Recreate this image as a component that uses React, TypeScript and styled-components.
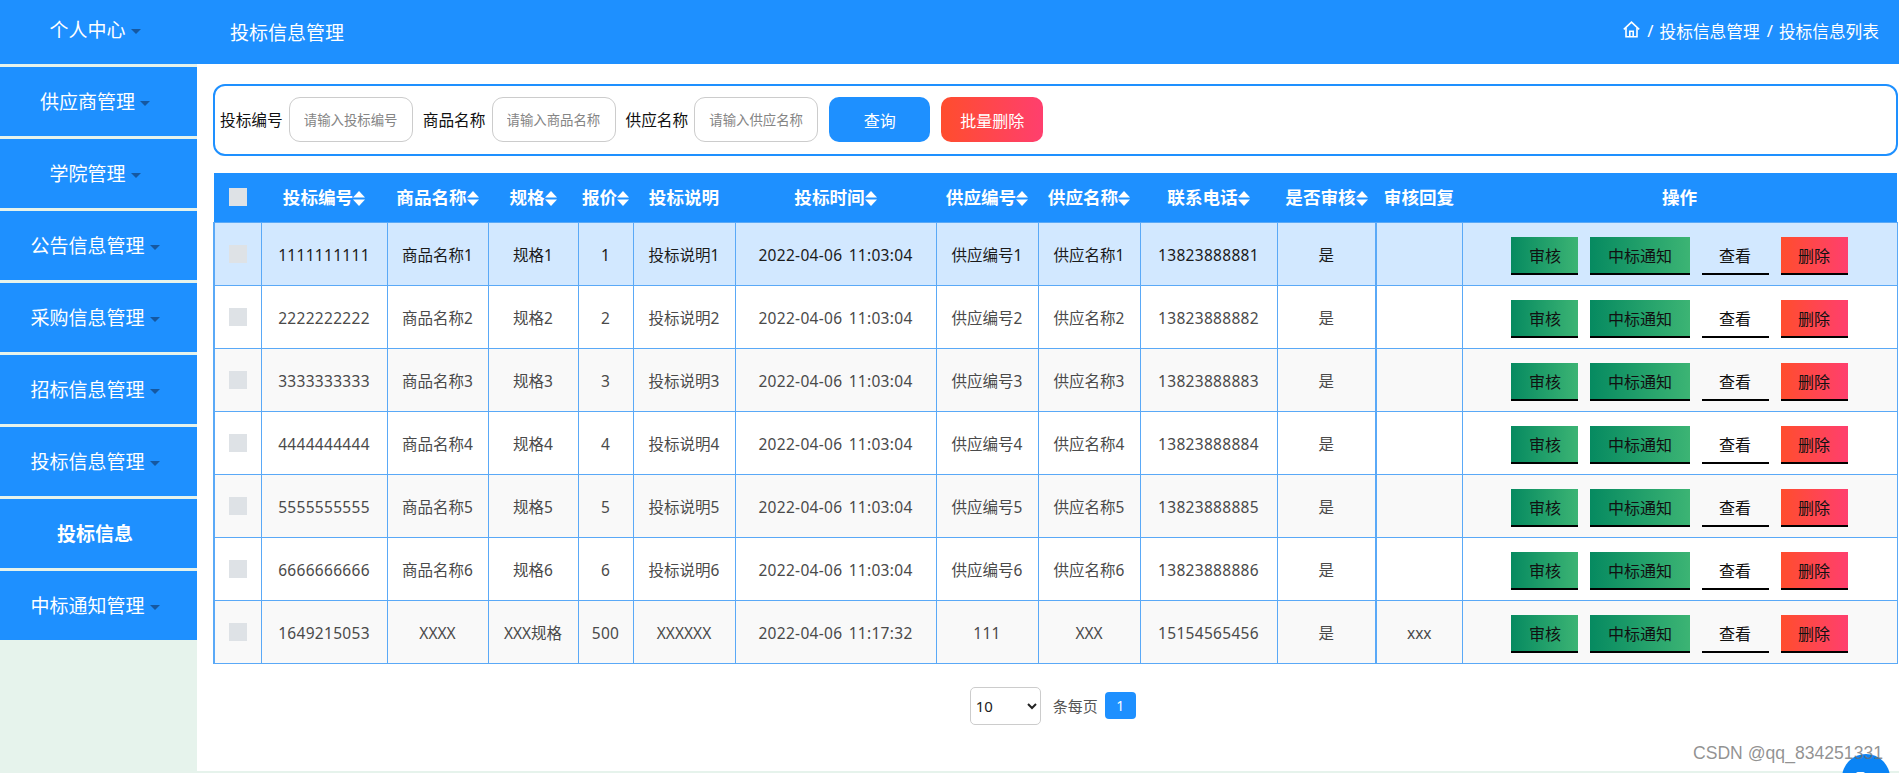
import React from 'react'
import styled, { createGlobalStyle } from 'styled-components'

const GlobalStyle = createGlobalStyle`
  html, body {
    margin: 0;
    padding: 0;
    background: #e6f3ec;
    overflow: hidden;
  }
  body, input, select, button {
    font-family: "Noto Sans", "Noto Sans CJK SC", "Liberation Sans", sans-serif;
  }
`

const menus = [
  { label: '供应商管理', caret: true },
  { label: '学院管理', caret: true },
  { label: '公告信息管理', caret: true },
  { label: '采购信息管理', caret: true },
  { label: '招标信息管理', caret: true },
  { label: '投标信息管理', caret: true },
  { label: '投标信息', caret: false },
  { label: '中标通知管理', caret: true },
]

const columns = [
  { title: '投标编号', sort: true, width: 126 },
  { title: '商品名称', sort: true, width: 101 },
  { title: '规格', sort: true, width: 90 },
  { title: '报价', sort: true, width: 55 },
  { title: '投标说明', sort: false, width: 102 },
  { title: '投标时间', sort: true, width: 201 },
  { title: '供应编号', sort: true, width: 102 },
  { title: '供应名称', sort: true, width: 102 },
  { title: '联系电话', sort: true, width: 137 },
  { title: '是否审核', sort: true, width: 99 },
  { title: '审核回复', sort: false, width: 86 },
]

const makeRow = (n: number) => [
  String(n).repeat(10),
  `商品名称${n}`,
  `规格${n}`,
  String(n),
  `投标说明${n}`,
  '2022-04-06 11:03:04',
  `供应编号${n}`,
  `供应名称${n}`,
  `1382388888${n}`,
  '是',
  '',
]

const rows = [
  ...[1, 2, 3, 4, 5, 6].map(makeRow),
  ['1649215053', 'XXXX', 'XXX规格', '500', 'XXXXXX', '2022-04-06 11:17:32', '111', 'XXX', '15154565456', '是', 'xxx'],
]

const isNumeric = (v: string) => /^[\d\- :]+$/.test(v)

function HomeIcon() {
  return <HomeSvg width="17" height="17" viewBox="0 0 17 17" fill="none" stroke="#fff" strokeWidth="1.6">
    <path d="M.8 8.4 8.5 1.2 16.2 8.4" />
    <path d="M3 6.8V15.8H14V6.8" />
    <path d="M6.8 15.8V10.2H10.2V15.8" />
  </HomeSvg>
}

function SortIcon() {
  return <SortSvg width="12" height="15" viewBox="0 0 12 15" fill="#fff">
    <path d="M6 0 12 6.5H0Z" />
    <path d="M0 8.5H12L6 15Z" />
  </SortSvg>
}

export default function App() {
  return <Page>
    <GlobalStyle />
    <TopBar>
      <UserMenu>个人中心<Caret /></UserMenu>
      <PageTitle>投标信息管理</PageTitle>
      <Breadcrumb>
        <HomeIcon />
        <Slash>/</Slash>投标信息管理
        <Slash>/</Slash>投标信息列表
      </Breadcrumb>
    </TopBar>
    <Body>
      <Sidebar>
        {menus.map(m => <MenuItem key={m.label} $active={!m.caret}>
          {m.label}{m.caret && <Caret />}
        </MenuItem>)}
      </Sidebar>
      <Content>
        <SearchBar>
          <FieldLabel>投标编号</FieldLabel>
          <SearchInput placeholder="请输入投标编号" />
          <FieldLabel>商品名称</FieldLabel>
          <SearchInput placeholder="请输入商品名称" />
          <FieldLabel>供应名称</FieldLabel>
          <SearchInput placeholder="请输入供应名称" />
          <QueryButton>查询</QueryButton>
          <BatchButton>批量删除</BatchButton>
        </SearchBar>
        <Table>
          <colgroup>
            <col width={47} />
            {columns.map(c => <col key={c.title} width={c.width} />)}
            <col width={435} />
          </colgroup>
          <thead>
            <tr>
              <HeadCheckCell><CheckBox /></HeadCheckCell>
              {columns.map(c => <HeadCell key={c.title}>
                {c.title}{c.sort && <SortIcon />}
              </HeadCell>)}
              <HeadCell>操作</HeadCell>
            </tr>
          </thead>
          <tbody>
            {rows.map((row, i) => <Row key={row[0]} $hover={i === 0}>
              <Cell><CheckBox /></Cell>
              {row.map((v, j) => <TextCell key={j} $num={isNumeric(v)}>{v}</TextCell>)}
              <Cell>
                <Actions>
                  <GreenAction>审核</GreenAction>
                  <GreenAction>中标通知</GreenAction>
                  <PlainAction>查看</PlainAction>
                  <RedAction>删除</RedAction>
                </Actions>
              </Cell>
            </Row>)}
          </tbody>
        </Table>
        <Pagination>
          <PageSize defaultValue="10">
            <option value="10">10</option>
            <option value="20">20</option>
          </PageSize>
          <PageText>条每页</PageText>
          <PageButton>1</PageButton>
        </Pagination>
      </Content>
    </Body>
    <Watermark>CSDN @qq_834251331</Watermark>
    <ChatBubble><ChatDot /></ChatBubble>
  </Page>
}

const Page = styled.div`
  position: relative;
  height: 773px;
  overflow: hidden;
`
const TopBar = styled.header`
  display: flex;
  align-items: center;
  height: 64px;
  background: #1e90ff;
  color: #fff;
`
const UserMenu = styled.div`
  width: 190px;
  padding-right: 7px;
  padding-bottom: 7px;
  text-align: center;
  font-size: 19px;
`
const Caret = styled.span`
  display: inline-block;
  margin-left: 5px;
  vertical-align: 3px;
  border-top: 5.5px solid rgba(20, 70, 130, .75);
  border-left: 5.5px solid transparent;
  border-right: 5.5px solid transparent;
`
const PageTitle = styled.div`
  margin-left: 33px;
  padding-bottom: 1px;
  font-size: 19px;
`
const Breadcrumb = styled.div`
  display: flex;
  align-items: center;
  margin-left: auto;
  padding-right: 20px;
  padding-bottom: 3px;
  font-size: 16.7px;
`
const HomeSvg = styled.svg`
  margin-bottom: 3px;
`
const Slash = styled.span`
  margin: 0 6px 0 7px;
`
const Body = styled.div`
  display: flex;
`
const Sidebar = styled.nav`
  display: flex;
  flex-direction: column;
  gap: 3px;
  width: 197px;
  padding-top: 3px;
  flex: none;
`
const MenuItem = styled.div<{ $active: boolean }>`
  box-sizing: border-box;
  height: 69px;
  padding: 1px 7px 0 0;
  line-height: 69px;
  text-align: center;
  background: #1e90ff;
  color: #fff;
  font-size: 19px;
  font-weight: ${p => p.$active ? 700 : 400};
`
const Content = styled.main`
  flex: 1;
  height: 707px;
  box-sizing: border-box;
  padding: 20px 2px 0 16px;
  background: #fff;
`
const SearchBar = styled.div`
  display: flex;
  align-items: center;
  box-sizing: border-box;
  height: 72px;
  padding: 0 0 1px 5px;
  border: 2px solid #1e90ff;
  border-radius: 12px;
`
const FieldLabel = styled.label`
  margin-right: 6px;
  font-size: 15.7px;
  color: #111;
`
const SearchInput = styled.input`
  box-sizing: border-box;
  width: 124px;
  height: 45px;
  margin-right: 10px;
  padding: 0 14px;
  border: 1px solid #ccc;
  border-radius: 11px;
  outline: none;
  font-size: 13.4px;
  &::placeholder {
    color: #858585;
  }
`
const QueryButton = styled.button`
  width: 101px;
  height: 45px;
  margin-left: 1px;
  border: none;
  border-radius: 10px;
  background: #1e90ff;
  color: #fff;
  font-size: 16px;
`
const BatchButton = styled(QueryButton)`
  width: 102px;
  margin-left: 11px;
  background: linear-gradient(to right, #ff4d2d, #ff3f6e);
`
const Table = styled.table`
  width: 1684px;
  margin-top: 17px;
  table-layout: fixed;
  border-collapse: collapse;
`
const HeadCell = styled.th`
  height: 49px;
  padding: 0 0 2px;
  box-sizing: border-box;
  background: #1e90ff;
  color: #fff;
  font-size: 17.6px;
  font-weight: 700;
  white-space: nowrap;
`
const HeadCheckCell = styled(HeadCell)`
  padding: 0;
`
const SortSvg = styled.svg`
  vertical-align: -2px;
`
const CheckBox = styled.span`
  display: block;
  width: 18px;
  height: 18px;
  margin: 0 auto;
  background: #dee2e6;
`
const Row = styled.tr<{ $hover: boolean }>`
  background: ${p => p.$hover ? '#d2e8ff' : '#fff'};
  color: ${p => p.$hover ? '#1a1a1a' : '#4a4a4a'};
  &:nth-child(odd) {
    background: ${p => p.$hover ? '#d2e8ff' : '#f9f9f9'};
  }
`
const Cell = styled.td`
  height: 63px;
  box-sizing: border-box;
  padding: 0;
  border: 1px solid #5aa9f7;
  text-align: center;
  font-size: 15.5px;
  white-space: nowrap;
  &:first-child {
    border-left-width: 2px;
  }
  &:nth-child(12) {
    border-left-width: 2px;
  }
`
const TextCell = styled(Cell)<{ $num: boolean }>`
  padding-top: 2px;
  letter-spacing: ${p => p.$num ? '.3px' : '0'};
  word-spacing: ${p => p.$num ? '2px' : '0'};
`
const Actions = styled.div`
  display: flex;
  justify-content: center;
  gap: 12px;
  padding-top: 5px;
`
const GreenAction = styled.button`
  height: 38px;
  padding: 0 17.5px;
  border: none;
  border-bottom: 2px solid #000;
  background: linear-gradient(to right, #068a60, #3cb474);
  color: #111;
  font-size: 16px;
`
const PlainAction = styled(GreenAction)`
  background: transparent;
`
const RedAction = styled(GreenAction)`
  background: linear-gradient(to right, #ff4d2d, #ff3f6e);
`
const Pagination = styled.div`
  display: flex;
  align-items: center;
  justify-content: center;
  margin-top: 23px;
  padding-right: 5px;
`
const PageSize = styled.select`
  box-sizing: border-box;
  width: 71px;
  height: 38px;
  padding-left: 1px;
  border: 1px solid #ccc;
  border-radius: 5px;
  background: #fff;
  color: #222;
  font-size: 15px;
`
const PageText = styled.span`
  margin: 0 7px 0 12px;
  font-size: 15px;
  color: #555;
`
const PageButton = styled.span`
  width: 31px;
  height: 27px;
  line-height: 27px;
  border-radius: 4px;
  background: #1e90ff;
  color: #fff;
  text-align: center;
  font-size: 14px;
`
const Watermark = styled.div`
  position: absolute;
  z-index: 2;
  right: 16px;
  top: 741px;
  font-family: "Liberation Sans", sans-serif;
  font-size: 17.6px;
  line-height: 24px;
  color: rgba(110, 110, 110, .75);
  white-space: nowrap;
`
const ChatBubble = styled.div`
  position: absolute;
  left: 1842px;
  top: 754px;
  width: 48px;
  height: 48px;
  border-radius: 50%;
  background: #0a84f5;
`
const ChatDot = styled.span`
  display: block;
  width: 9px;
  height: 9px;
  margin: 18px 0 0 14px;
  border-radius: 2px;
  background: #fff;
`
